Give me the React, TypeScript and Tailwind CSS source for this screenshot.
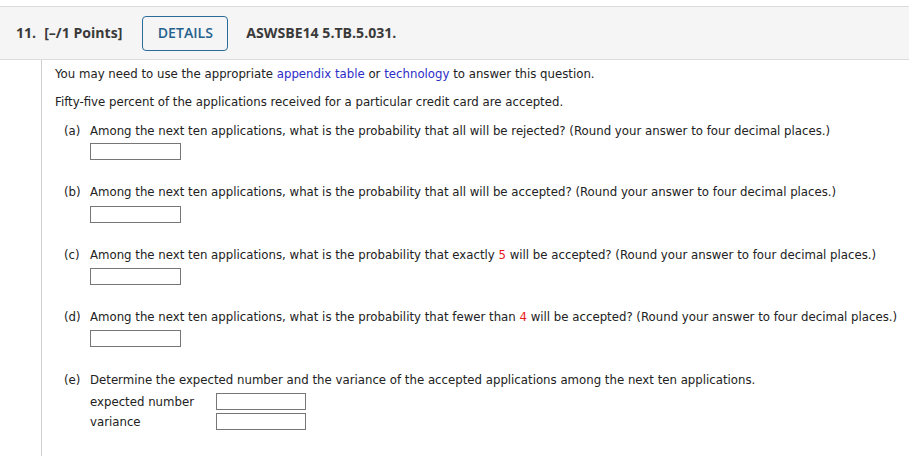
import React from "react";

const body = { fontFamily: "Verdana, 'DejaVu Sans', sans-serif" } as React.CSSProperties;

function Box({ w = "w-[91px]" }: { w?: string }) {
  return <div className={`h-[17px] ${w} border border-[#767676] bg-white`} />;
}

function Part({ label, children }: { label: string; children: React.ReactNode }) {
  return (
    <div className="flex">
      <div className="w-[26px] shrink-0">{label}</div>
      <div>{children}</div>
    </div>
  );
}

export default function App() {
  return (
    <div className="w-[909px] h-[456px] bg-white overflow-hidden text-[#222]">
      <div className="h-[6px]" />
      <div
        className="h-[54px] bg-[#f5f5f5] border-y border-[#dcdcdc] flex items-center text-[14.1px] font-bold text-[#3a3a3a]"
        style={{ fontFamily: "'Open Sans', sans-serif" }}
      >
        <span className="ml-[16px]">11.</span>
        <span className="ml-[8px]">[–/1 Points]</span>
        <div className="ml-[20px] w-[86px] h-[35px] border border-[#2a6c98] rounded-[4px] flex items-center justify-center text-[#24628e] font-semibold">
          DETAILS
        </div>
        <span className="ml-[18px]">ASWSBE14 5.TB.5.031.</span>
      </div>
      <div className="flex">
        <div className="ml-[41px] w-px bg-[#cfcfcf] h-[400px]" />
        <div className="pl-[13px] text-[11.75px] leading-[16px] whitespace-nowrap" style={body}>
          <div className="mt-[6px]">
            You may need to use the appropriate <span className="text-[#2d2dc8]">appendix table</span> or{" "}
            <span className="text-[#2d2dc8]">technology</span> to answer this question.
          </div>
          <div className="mt-[12px]">Fifty-five percent of the applications received for a particular credit card are accepted.</div>
          <div className="ml-[9px]">
            <div className="mt-[13px]">
              <Part label="(a)">
                <div>Among the next ten applications, what is the probability that all will be rejected? (Round your answer to four decimal places.)</div>
                <div className="mt-[4px]"><Box /></div>
              </Part>
            </div>
            <div className="mt-[24px]">
              <Part label="(b)">
                <div>Among the next ten applications, what is the probability that all will be accepted? (Round your answer to four decimal places.)</div>
                <div className="mt-[6px]"><Box /></div>
              </Part>
            </div>
            <div className="mt-[24px]">
              <Part label="(c)">
                <div>
                  Among the next ten applications, what is the probability that exactly <span className="text-[#e8191c]">5</span> will be accepted? (Round your answer to four decimal places.)
                </div>
                <div className="mt-[5px]"><Box /></div>
              </Part>
            </div>
            <div className="mt-[24px]">
              <Part label="(d)">
                <div>
                  Among the next ten applications, what is the probability that fewer than <span className="text-[#e8191c]">4</span> will be accepted? (Round your answer to four decimal places.)
                </div>
                <div className="mt-[5px]"><Box /></div>
              </Part>
            </div>
            <div className="mt-[25px]">
              <Part label="(e)">
                <div>Determine the expected number and the variance of the accepted applications among the next ten applications.</div>
                <div className="mt-[5px] flex items-center">
                  <div className="w-[126px]">expected number</div>
                  <Box w="w-[90px]" />
                </div>
                <div className="mt-[3px] flex items-center">
                  <div className="w-[126px]">variance</div>
                  <Box w="w-[90px]" />
                </div>
              </Part>
            </div>
          </div>
        </div>
      </div>
    </div>
  );
}
